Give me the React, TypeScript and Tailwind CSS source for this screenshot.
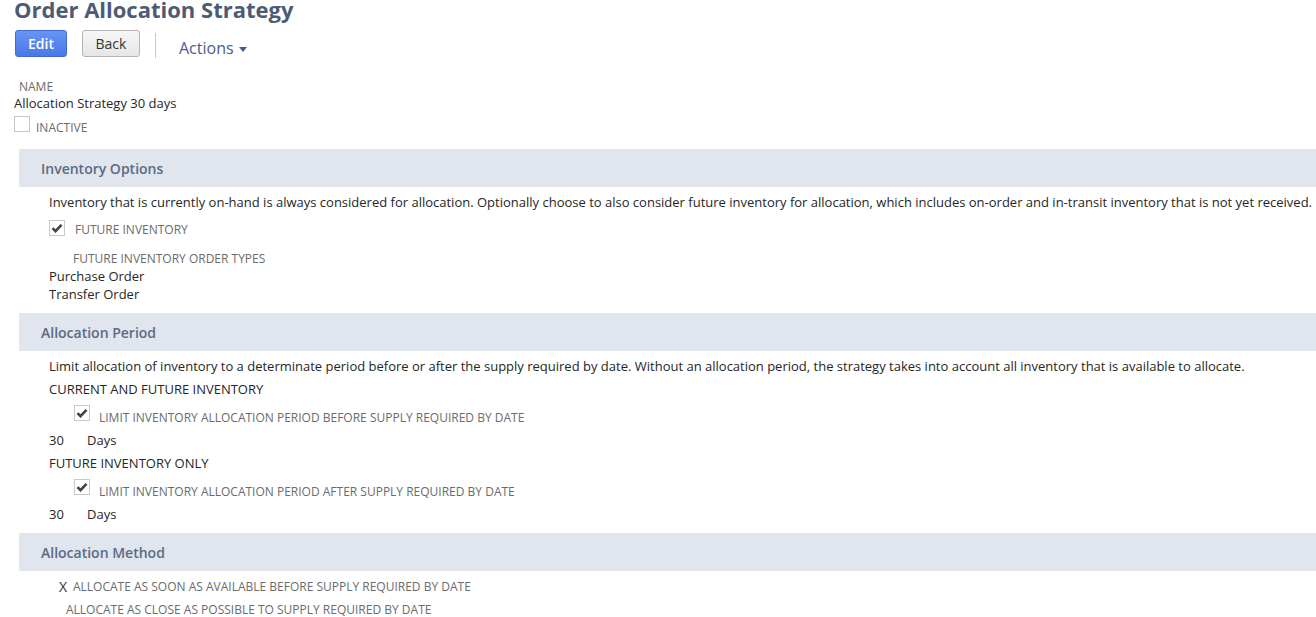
import React from "react";

const CheckBox = ({ checked }: { checked?: boolean }) => (
  <span className="inline-flex h-[16px] w-[16px] shrink-0 items-center justify-center border border-[#c8c8c8] bg-white">
    {checked && (
      <svg width="12" height="10" viewBox="0 0 12 10">
        <path d="M1.5 5.2 L4.5 8.2 L10.5 1.8" fill="none" stroke="#444" strokeWidth="2.6" />
      </svg>
    )}
  </span>
);

const SectionHeader = ({ title }: { title: string }) => (
  <div className="ml-[19px] flex h-[38px] items-center bg-[#e0e5ee] pl-[22px] text-[14px] font-semibold text-[#5c6b82]">
    {title}
  </div>
);

const Label = ({ children, className = "" }: { children: React.ReactNode; className?: string }) => (
  <span className={`text-[12px] uppercase text-[#6b6b6b] ${className}`}>{children}</span>
);

// checkbox + label row, the label sits a little lower than the box
const CheckRow = ({
  checked,
  label,
  className,
  labelClass,
}: {
  checked?: boolean;
  label: string;
  className: string;
  labelClass: string;
}) => (
  <div className={`flex h-[16px] items-start ${className}`}>
    <CheckBox checked={checked} />
    <Label className={`leading-[16px] ${labelClass}`}>{label}</Label>
  </div>
);

const App = () => {
  return (
    <div className="h-[617px] w-[1316px] overflow-hidden bg-white font-['Open_Sans',sans-serif] text-[13px] text-[#262626]">
      <h1 className="-mt-[6px] ml-[14px] text-[22px] font-bold leading-[30px] text-[#4d5b73]">
        Order Allocation Strategy
      </h1>

      <div className="ml-[15px] mt-[6px] flex h-[27px] items-center">
        <button className="h-[27px] w-[52px] rounded-[3px] border border-[#3e6bd8] bg-gradient-to-b from-[#6894f5] to-[#4a78e8] text-[14px] font-semibold leading-[25px] text-white">
          Edit
        </button>
        <button className="ml-[15px] h-[27px] w-[58px] rounded-[3px] border border-[#b4b4b4] bg-gradient-to-b from-[#f7f7f7] to-[#e6e6e6] text-[14px] leading-[25px] text-[#333]">
          Back
        </button>
        <div className="ml-[15px] mt-[3px] h-[25px] w-px bg-[#c8c8c8]" />
        <div className="ml-[23px] mt-[9px] flex items-center text-[16px] text-[#4a5c8e]">
          Actions
          <svg className="ml-[5px] mt-[2px]" width="8" height="5" viewBox="0 0 8 5">
            <path d="M0 0 L8 0 L4 5 Z" fill="#4a5c8e" />
          </svg>
        </div>
      </div>

      <div className="ml-[19px] mt-[21px] leading-[17px]">
        <Label>Name</Label>
      </div>
      <div className="ml-[14px] leading-[17px]">Allocation Strategy 30 days</div>
      <CheckRow label="Inactive" className="ml-[14px] mt-[4px]" labelClass="ml-[6px] mt-[4px]" />

      <div className="mt-[17px]">
        <SectionHeader title="Inventory Options" />
        <div className="ml-[49px] mt-[6px] leading-[18px]">
          Inventory that is currently on-hand is always considered for allocation. Optionally choose to also consider
          future inventory for allocation, which includes on-order and in-transit inventory that is not yet received.
        </div>
        <CheckRow checked label="Future Inventory" className="ml-[49px] mt-[9px]" labelClass="ml-[10px] mt-[2px]" />
        <div className="ml-[73px] mt-[13px] leading-[18px]">
          <Label>Future Inventory Order Types</Label>
        </div>
        <div className="-mt-[1px] ml-[49px] leading-[18px]">Purchase Order</div>
        <div className="ml-[49px] leading-[18px]">Transfer Order</div>
      </div>

      <div className="mt-[10px]">
        <SectionHeader title="Allocation Period" />
        <div className="ml-[49px] mt-[6px] leading-[18px]">
          Limit allocation of inventory to a determinate period before or after the supply required by date. Without an
          allocation period, the strategy takes into account all inventory that is available to allocate.
        </div>
        <div className="ml-[49px] mt-[5px] uppercase leading-[18px]">Current and Future Inventory</div>
        <CheckRow
          checked
          label="Limit Inventory Allocation Period Before Supply Required By Date"
          className="ml-[74px] mt-[7px]"
          labelClass="ml-[9px] mt-[5px]"
        />
        <div className="ml-[49px] mt-[10px] flex leading-[18px]">
          <span className="w-[38px]">30</span>
          <span>Days</span>
        </div>
        <div className="ml-[49px] mt-[5px] uppercase leading-[18px]">Future Inventory Only</div>
        <CheckRow
          checked
          label="Limit Inventory Allocation Period After Supply Required By Date"
          className="ml-[74px] mt-[7px]"
          labelClass="ml-[9px] mt-[5px]"
        />
        <div className="ml-[49px] mt-[10px] flex leading-[18px]">
          <span className="w-[38px]">30</span>
          <span>Days</span>
        </div>
      </div>

      <div className="mt-[10px]">
        <SectionHeader title="Allocation Method" />
        <div className="ml-[59px] mt-[7px] flex items-center leading-[18px]">
          <span className="w-[14px] text-[14px] text-[#333]">X</span>
          <Label>Allocate as soon as available before supply required by date</Label>
        </div>
        <div className="ml-[66px] mt-[5px] leading-[17px]">
          <Label>Allocate as close as possible to supply required by date</Label>
        </div>
      </div>
    </div>
  );
};

export default App;
